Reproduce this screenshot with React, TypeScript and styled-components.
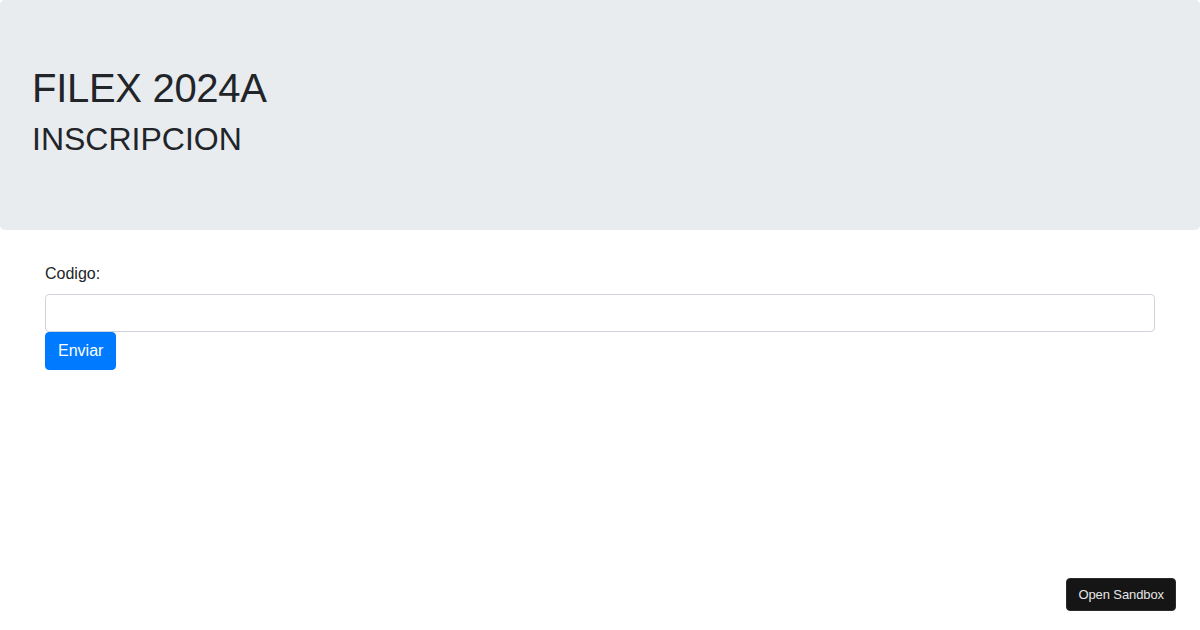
import React from 'react';
import styled, { createGlobalStyle } from 'styled-components';

const GlobalStyle = createGlobalStyle`
  *, *::before, *::after {
    box-sizing: border-box;
  }
  body {
    margin: 0;
    font-family: "Liberation Sans", Arial, sans-serif;
    font-size: 16px;
    line-height: 1.5;
    color: #212529;
    background: #fff;
  }
`;

const Jumbotron = styled.header`
  padding: 64px 32px;
  margin-bottom: 32px;
  background: #e9ecef;
  border-radius: 4.8px;
`;

const Title = styled.h1`
  margin: 0 0 8px;
  font-size: 40px;
  font-weight: 500;
  line-height: 1.2;
  letter-spacing: -0.3px;
`;

const Subtitle = styled.h2`
  margin: 0 0 8px;
  font-size: 32px;
  font-weight: 500;
  line-height: 1.2;
`;

const Container = styled.main`
  max-width: 1140px;
  margin: 0 auto;
  padding: 0 15px;
`;

const Form = styled.form`
  display: flex;
  flex-direction: column;
  align-items: flex-start;
`;

const Label = styled.label`
  margin-bottom: 8px;
`;

const Input = styled.input`
  display: block;
  width: 100%;
  height: 38px;
  padding: 6px 12px;
  font: inherit;
  color: #495057;
  background: #fff;
  border: 1px solid #ced4da;
  border-radius: 4px;
  outline: none;
`;

const Button = styled.button`
  padding: 6px 12px;
  font: inherit;
  line-height: 1.5;
  color: #fff;
  background: #007bff;
  border: 1px solid #007bff;
  border-radius: 4px;
  cursor: pointer;
`;

const SandboxButton = styled.button`
  position: fixed;
  right: 24px;
  bottom: 19px;
  height: 33px;
  padding: 0 11px;
  font-family: "Liberation Sans", Arial, sans-serif;
  font-size: 13px;
  letter-spacing: -0.1px;
  color: #e6e6e6;
  background: #151515;
  border: 1px solid #2a2a2a;
  border-radius: 4px;
  cursor: pointer;
`;

const App: React.FC = () => {
  return (
    <>
      <GlobalStyle />
      <Jumbotron>
        <Title>FILEX 2024A</Title>
        <Subtitle>INSCRIPCION</Subtitle>
      </Jumbotron>
      <Container>
        <Form onSubmit={(e) => e.preventDefault()}>
          <Label htmlFor="codigo">Codigo:</Label>
          <Input id="codigo" type="text" />
          <Button type="submit">Enviar</Button>
        </Form>
      </Container>
      <SandboxButton>Open Sandbox</SandboxButton>
    </>
  );
};

export default App;
